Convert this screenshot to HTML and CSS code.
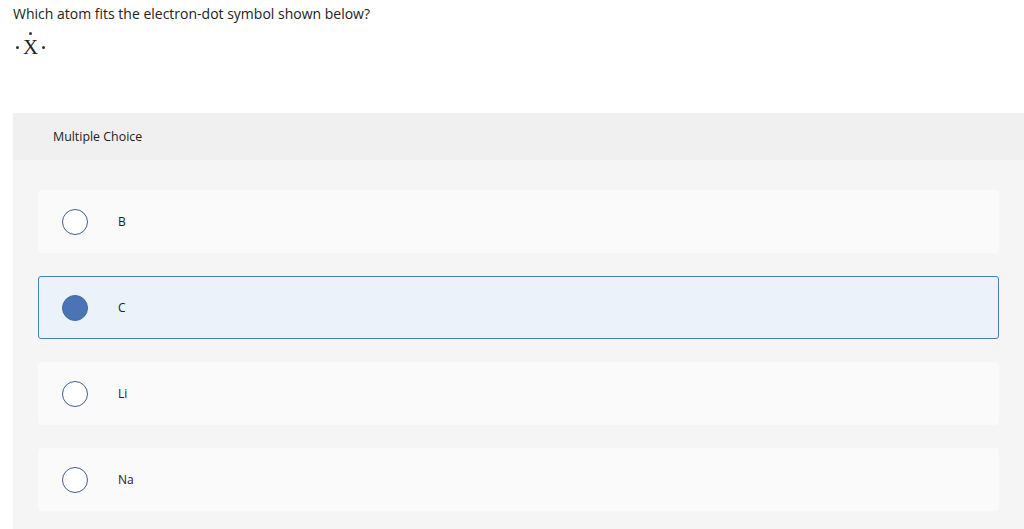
FILE: index.html
```html
<!DOCTYPE html>
<html>
<head>
<meta charset="utf-8">
<link rel="stylesheet" href="styles.css">
</head>
<body>
<div class="question">
  <p class="prompt">Which atom fits the electron-dot symbol shown below?</p>
  <div class="symbol">
    <span class="dot dot-left"></span>
    <span class="x">X<span class="dot dot-top"></span></span>
    <span class="dot dot-right"></span>
  </div>
</div>
<div class="panel">
  <div class="panel-header">Multiple Choice</div>
  <div class="panel-body">
    <div class="option"><span class="radio"></span><span class="label">B</span></div>
    <div class="option selected"><span class="radio"></span><span class="label">C</span></div>
    <div class="option"><span class="radio"></span><span class="label">Li</span></div>
    <div class="option"><span class="radio"></span><span class="label">Na</span></div>
  </div>
</div>
</body>
</html>
```
FILE: styles.css
```css
html, body {
  margin: 0;
  padding: 0;
  background: #ffffff;
}
body {
  font-family: "Open Sans", "Liberation Sans", sans-serif;
  color: #222222;
  height: 529px;
  overflow: hidden;
}
.question {
  padding: 5px 0 0 13px;
  height: 113px;
  box-sizing: border-box;
}
.prompt {
  margin: 0;
  font-size: 14px;
  line-height: 18px;
}
.symbol {
  display: flex;
  align-items: center;
  margin-top: 13px;
  margin-left: 3px;
  height: 22px;
}
.x {
  position: relative;
  font-family: "Liberation Serif", serif;
  font-size: 21px;
  line-height: 22px;
  color: #222;
  margin: 0 4px 0 4px;
}
.dot {
  width: 3px;
  height: 3px;
  border-radius: 50%;
  background: #333;
  display: inline-block;
}
.dot-top {
  position: absolute;
  left: 6px;
  top: -4px;
}
.panel {
  margin-left: 13px;
}
.panel-header {
  height: 47px;
  background: #f0f0f0;
  display: flex;
  align-items: center;
  padding-left: 40px;
  font-size: 12.4px;
  color: #222;
}
.panel-body {
  background: #f5f5f5;
  padding: 30px 25px 20px 25px;
  display: flex;
  flex-direction: column;
  gap: 23px;
}
.option {
  height: 63px;
  box-sizing: border-box;
  background: #fafafa;
  border: 1px solid #fafafa;
  border-radius: 3px;
  display: flex;
  align-items: center;
  padding-left: 23px;
}
.option.selected {
  background: #ebf2fa;
  border-color: #4a7bc0;
}
.radio {
  width: 26px;
  height: 26px;
  box-sizing: border-box;
  border: 1.5px solid #3e5f96;
  border-radius: 50%;
  background: #ffffff;
  flex: none;
}
.selected .radio {
  background: #4a74b4;
  border-color: #43689f;
}
.label {
  margin-left: 30px;
  font-size: 12px;
  color: #222;
}
```
